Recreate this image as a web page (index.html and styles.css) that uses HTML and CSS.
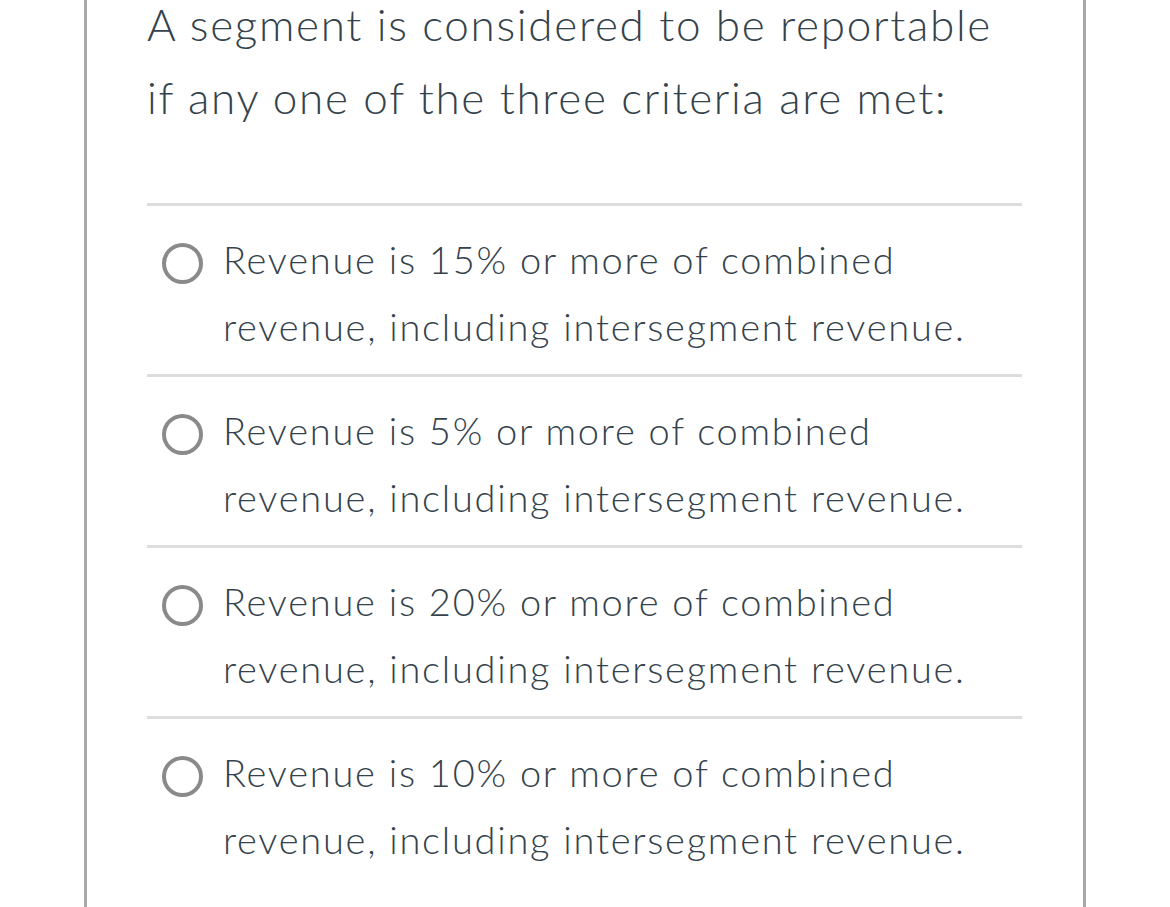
FILE: index.html
```html
<!DOCTYPE html>
<html>
<head>
<meta charset="utf-8">
<link rel="stylesheet" href="styles.css">
</head>
<body>
<div class="frame">
  <div class="question">
    <p class="prompt">A segment is considered to be reportable if any one of the three criteria are met:</p>
    <div class="answers">
      <label class="answer"><span class="radio"></span><span class="text">Revenue is 15% or more of combined revenue, including intersegment revenue.</span></label>
      <label class="answer"><span class="radio"></span><span class="text">Revenue is 5% or more of combined revenue, including intersegment revenue.</span></label>
      <label class="answer"><span class="radio"></span><span class="text">Revenue is 20% or more of combined revenue, including intersegment revenue.</span></label>
      <label class="answer"><span class="radio"></span><span class="text">Revenue is 10% or more of combined revenue, including intersegment revenue.</span></label>
    </div>
  </div>
</div>
</body>
</html>
```

FILE: styles.css
```css
html, body {
  margin: 0;
  padding: 0;
  background: #ffffff;
  overflow: hidden;
}
body {
  font-family: "Lato Light", Lato, "Open Sans", sans-serif;
  color: #34424c;
  height: 907px;
}
.frame {
  display: flow-root;
  margin-left: 84px;
  width: 875px;
  height: 907px;
  overflow: hidden;
  border-left: 3px solid #a8a8a8;
  border-right: 3px solid #a8a8a8;
  padding: 0 61px 0 60px;
}
.question {
  margin-top: -12px;
}
.prompt {
  margin: 0;
  font-size: 44px;
  font-weight: 300;
  line-height: 73px;
  letter-spacing: 1.7px;
  width: 870px;
}
.answers {
  margin-top: 69px;
}
.answer {
  display: flex;
  align-items: flex-start;
  padding: 20px 0 14px 15px;
  border-top: 3px solid #dddddd;
}
.radio {
  flex: none;
  width: 33px;
  height: 33px;
  border: 4px solid #8a8a8a;
  border-radius: 50%;
  margin-top: 17px;
  margin-right: 20px;
}
.text {
  font-size: 38px;
  font-weight: 300;
  line-height: 67px;
  letter-spacing: 1.75px;
  width: 790px;
}
```
